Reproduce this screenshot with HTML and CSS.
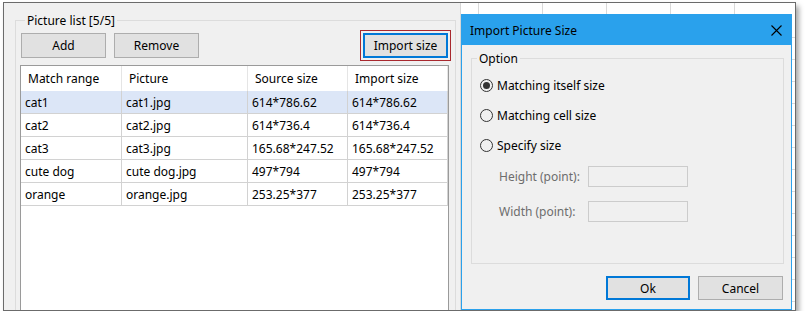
FILE: index.html
```html
<!DOCTYPE html>
<html lang="en">
<head>
    <meta charset="UTF-8">
    <meta name="viewport" content="width=device-width, initial-scale=1.0">
    <title>Import Picture Size</title>
    <link rel="stylesheet" href="styles.css">
</head>
<body>

    <div class="frame">

        <!-- Left task pane -->
        <div class="panel">
            <div class="group">
                <span class="group-title">Picture list [5/5]</span>
                <div class="toolbar">
                    <button class="btn">Add</button>
                    <button class="btn">Remove</button>
                    <button class="btn btn-focus btn-marked">Import size</button>
                </div>
                <div class="list">
                    <table class="list-table">
                        <thead>
                            <tr>
                                <th class="col-range">Match range</th>
                                <th class="col-pic">Picture</th>
                                <th class="col-src">Source size</th>
                                <th class="col-imp">Import size</th>
                            </tr>
                        </thead>
                        <tbody>
                            <tr class="selected">
                                <td>cat1</td><td>cat1.jpg</td><td>614*786.62</td><td>614*786.62</td>
                            </tr>
                            <tr>
                                <td>cat2</td><td>cat2.jpg</td><td>614*736.4</td><td>614*736.4</td>
                            </tr>
                            <tr>
                                <td>cat3</td><td>cat3.jpg</td><td>165.68*247.52</td><td>165.68*247.52</td>
                            </tr>
                            <tr>
                                <td>cute dog</td><td>cute dog.jpg</td><td>497*794</td><td>497*794</td>
                            </tr>
                            <tr>
                                <td>orange</td><td>orange.jpg</td><td>253.25*377</td><td>253.25*377</td>
                            </tr>
                        </tbody>
                    </table>
                </div>
            </div>
        </div>

        <!-- Worksheet behind the dialog -->
        <div class="sheet"></div>

        <!-- Dialog window -->
        <div class="dialog">
            <div class="dialog-title">
                <span>Import Picture Size</span>
                <svg class="close-icon" width="11" height="11" viewBox="0 0 11 11">
                    <path d="M0.5 0.5 L10.5 10.5 M10.5 0.5 L0.5 10.5" stroke="#000" stroke-width="1.1" fill="none"/>
                </svg>
            </div>
            <div class="dialog-body">
                <div class="option-box">
                    <span class="group-title option-title">Option</span>
                    <div class="radio-row"><span class="radio checked"></span>Matching itself size</div>
                    <div class="radio-row"><span class="radio"></span>Matching cell size</div>
                    <div class="radio-row"><span class="radio"></span>Specify size</div>
                    <div class="size-fields">
                        <span class="field-label">Height (point):</span>
                        <span class="field-input"></span>
                        <span class="field-label">Width (point):</span>
                        <span class="field-input"></span>
                    </div>
                </div>
                <div class="dialog-buttons">
                    <button class="btn btn-focus btn-ok">Ok</button>
                    <button class="btn btn-cancel">Cancel</button>
                </div>
            </div>
        </div>

    </div>

</body>
</html>
```

FILE: styles.css
```css
/* Basic Reset */
* {
    margin: 0;
    padding: 0;
    box-sizing: border-box;
}

body {
    font-family: 'Noto Sans', 'Liberation Sans', sans-serif;
    font-size: 12px;
    color: #000;
    background-color: #fff;
}

/* Outer window */
.frame {
    position: relative;
    display: flex;
    width: 793px;
    height: 309px;
    margin: 2px 0 0 3px;
    border: 1px solid #6b6b6b;
    overflow: hidden;
    box-shadow: 3px 4px 5px rgba(0, 0, 0, 0.35);
}

.panel {
    width: 457px;
    flex-shrink: 0;
    background-color: #f0f0f0;
    border-right: 1px solid #d6d6d6;
}

.group {
    width: 441px;
    height: 320px;
    margin: 17px 0 0 11px;
    padding-left: 4px;
    border: 1px solid #dcdcdc;
}

.group-title {
    display: block;
    width: fit-content;
    margin: -8px 0 0 5px;
    padding: 0 2px;
    line-height: 15px;
    background-color: #f0f0f0;
}

.toolbar {
    display: flex;
    gap: 8px;
    margin: 5px 7px 0 1px;
}

.btn {
    font-family: inherit;
    font-size: 12px;
    color: #000;
    width: 85px;
    height: 25px;
    background-color: #e1e1e1;
    border: 1px solid #adadad;
}

.btn-focus {
    border: 2px solid #0078d7;
}

.toolbar .btn-marked {
    margin-left: auto;
    outline: 1px solid #a8282e;
    outline-offset: 2px;
}

/* Picture list */
.list {
    width: 429px;
    height: 260px;
    margin-top: 7px;
    background-color: #fff;
    border: 1px solid #9a9a9a;
}

.list-table {
    table-layout: fixed;
    border-collapse: separate;
    border-spacing: 0;
    width: 427px;
}

.list-table th {
    height: 25px;
    padding-left: 7px;
    font-weight: normal;
    text-align: left;
    border-right: 1px solid #e5e5e5;
}

.col-range { width: 101px; }
.col-pic { width: 126px; }
.col-src { width: 100px; }
.col-imp { width: 100px; }

.list-table td {
    height: 23px;
    padding-left: 4px;
    white-space: nowrap;
    border-right: 1px solid #d2d2d2;
    border-bottom: 1px solid #d2d2d2;
}

.list-table tr.selected td {
    background-color: #dce6f7;
}

/* Worksheet grid */
.sheet {
    flex: 1;
    background-color: #fff;
    background-image:
        repeating-linear-gradient(90deg, transparent 0 63px, #d9d9d9 63px 64px),
        repeating-linear-gradient(180deg, transparent 0 21px, #d9d9d9 21px 22px);
    background-position: -46px 0, 0 13px;
}

/* Dialog */
.dialog {
    position: absolute;
    left: 457px;
    top: 11px;
    width: 331px;
    height: 296px;
    background-color: #f0f0f0;
    border: 1px solid #2aa1ec;
}

.dialog-title {
    display: flex;
    align-items: center;
    justify-content: space-between;
    height: 30px;
    padding: 0 9px 0 8px;
    background-color: #2aa1ec;
}

.close-icon {
    display: block;
}

.dialog-body {
    padding-top: 13px;
}

.option-box {
    width: 313px;
    height: 206px;
    margin-left: 9px;
    padding-left: 8px;
    border: 1px solid #dcdcdc;
}

.option-title {
    margin-left: -3px;
    margin-bottom: 4px;
}

.radio-row {
    display: flex;
    align-items: center;
    gap: 4px;
    height: 30px;
}

.radio {
    display: flex;
    align-items: center;
    justify-content: center;
    width: 13px;
    height: 13px;
    border: 1px solid #333;
    border-radius: 50%;
}

.radio.checked::after {
    content: "";
    width: 7px;
    height: 7px;
    border-radius: 50%;
    background-color: #333;
}

.size-fields {
    display: grid;
    grid-template-columns: 89px 100px;
    grid-auto-rows: 21px;
    row-gap: 14px;
    align-items: center;
    margin: 6px 0 0 19px;
}

.field-label {
    color: #6d6d6d;
}

.field-input {
    height: 21px;
    background-color: #f0f0f0;
    border: 1px solid #cccccc;
}

.dialog-buttons {
    display: flex;
    justify-content: flex-end;
    gap: 8px;
    margin: 12px 8px 0 0;
}

.dialog-buttons .btn {
    height: 24px;
}

.btn-ok {
    width: 84px;
}

.btn-cancel {
    width: 85px;
}
```
